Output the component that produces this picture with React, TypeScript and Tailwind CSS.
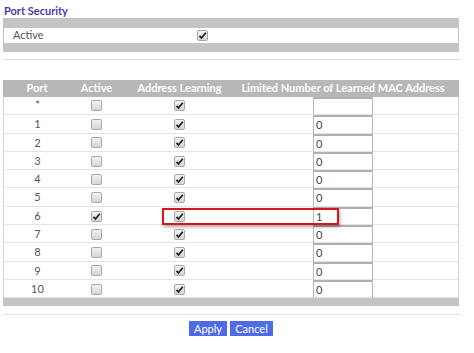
import React from "react";

const rows = [
  { port: "*", active: false, value: "" },
  { port: "1", active: false, value: "0" },
  { port: "2", active: false, value: "0" },
  { port: "3", active: false, value: "0" },
  { port: "4", active: false, value: "0" },
  { port: "5", active: false, value: "0" },
  { port: "6", active: true, value: "1" },
  { port: "7", active: false, value: "0" },
  { port: "8", active: false, value: "0" },
  { port: "9", active: false, value: "0" },
  { port: "10", active: false, value: "0" },
];

const Check = ({ checked }: { checked: boolean }) => (
  <span className="inline-flex w-[11px] h-[11px] items-center justify-center rounded-[2px] border border-[#a9a9a9] bg-gradient-to-b from-[#f2f2f2] to-[#d6d6d6]">
    {checked && (
      <svg width="9" height="9" viewBox="0 0 9 9">
        <path d="M1.5 4.8 L3.5 7 L7.8 1.8" fill="none" stroke="#222" strokeWidth="1.8" />
      </svg>
    )}
  </span>
);

const App = () => {
  return (
    <div
      className="w-[474px] h-[353px] bg-white text-[11px] text-[#555] overflow-hidden relative"
      style={{ fontFamily: '"Lato", "DejaVu Sans", sans-serif' }}
    >
      <div className="pl-[4px] pt-[4px] h-[18px] font-bold text-[#4b3ca8] leading-[14px]">Port Security</div>
      <div className="ml-[3px] w-[456px] bg-[#c4c4c4] pt-[10px] pb-[9px] px-[1px]">
        <div className="bg-white h-[15px] flex items-center">
          <span className="pl-[9px] w-[193px]">Active</span>
          <Check checked />
        </div>
      </div>
      <div className="ml-[3px] w-[458px] h-px bg-[#e2e2e2] mt-[7px]" />

      <div className="ml-[3px] w-[456px] mt-[20px]">
        <div className="grid grid-cols-[68px_51px_115px_222px] h-[17px] bg-[#b7b7b7] text-white font-bold items-center">
          <div className="text-center">Port</div>
          <div className="text-center">Active</div>
          <div className="text-center">Address Learning</div>
          <div className="text-center pr-[10px] whitespace-nowrap">Limited Number of Learned MAC Address</div>
        </div>
        <div className="border-x border-[#d4d4d4]">
          {rows.map((r) => (
            <div
              key={r.port}
              className="grid grid-cols-[67px_51px_115px_221px] h-[18.3px] border-b border-[#e4e4e4] items-center"
            >
              <div className="text-center">{r.port}</div>
              <div className="flex justify-center">
                <Check checked={r.active} />
              </div>
              <div className="flex justify-center">
                <Check checked />
              </div>
              <div className="h-full pl-[76px] flex">
                <div className="w-[60px] h-full border-l border-r border-[#b9b9b9] border-t-[2px] border-t-[#b0b0b0] flex items-center pl-[2px] text-[#444]">
                  {r.value}
                </div>
              </div>
            </div>
          ))}
        </div>
        <div className="h-[8px] bg-[#c4c4c4]" />
      </div>
      <div className="ml-[3px] w-[458px] h-px bg-[#e2e2e2] mt-[8px]" />
      <div className="flex gap-[3px] ml-[189px] mt-[6px]">
        <button className="h-[15px] w-[38px] bg-[#4f6ce8] text-white text-[11px] leading-[15px]">Apply</button>
        <button className="h-[15px] w-[43px] bg-[#4f6ce8] text-white text-[11px] leading-[15px]">Cancel</button>
      </div>

      <div className="absolute left-[162px] top-[208px] w-[177px] h-[17px] border-2 border-[#d8151b] shadow-[1px_2px_3px_rgba(0,0,0,0.35)]" />
    </div>
  );
};

export default App;
